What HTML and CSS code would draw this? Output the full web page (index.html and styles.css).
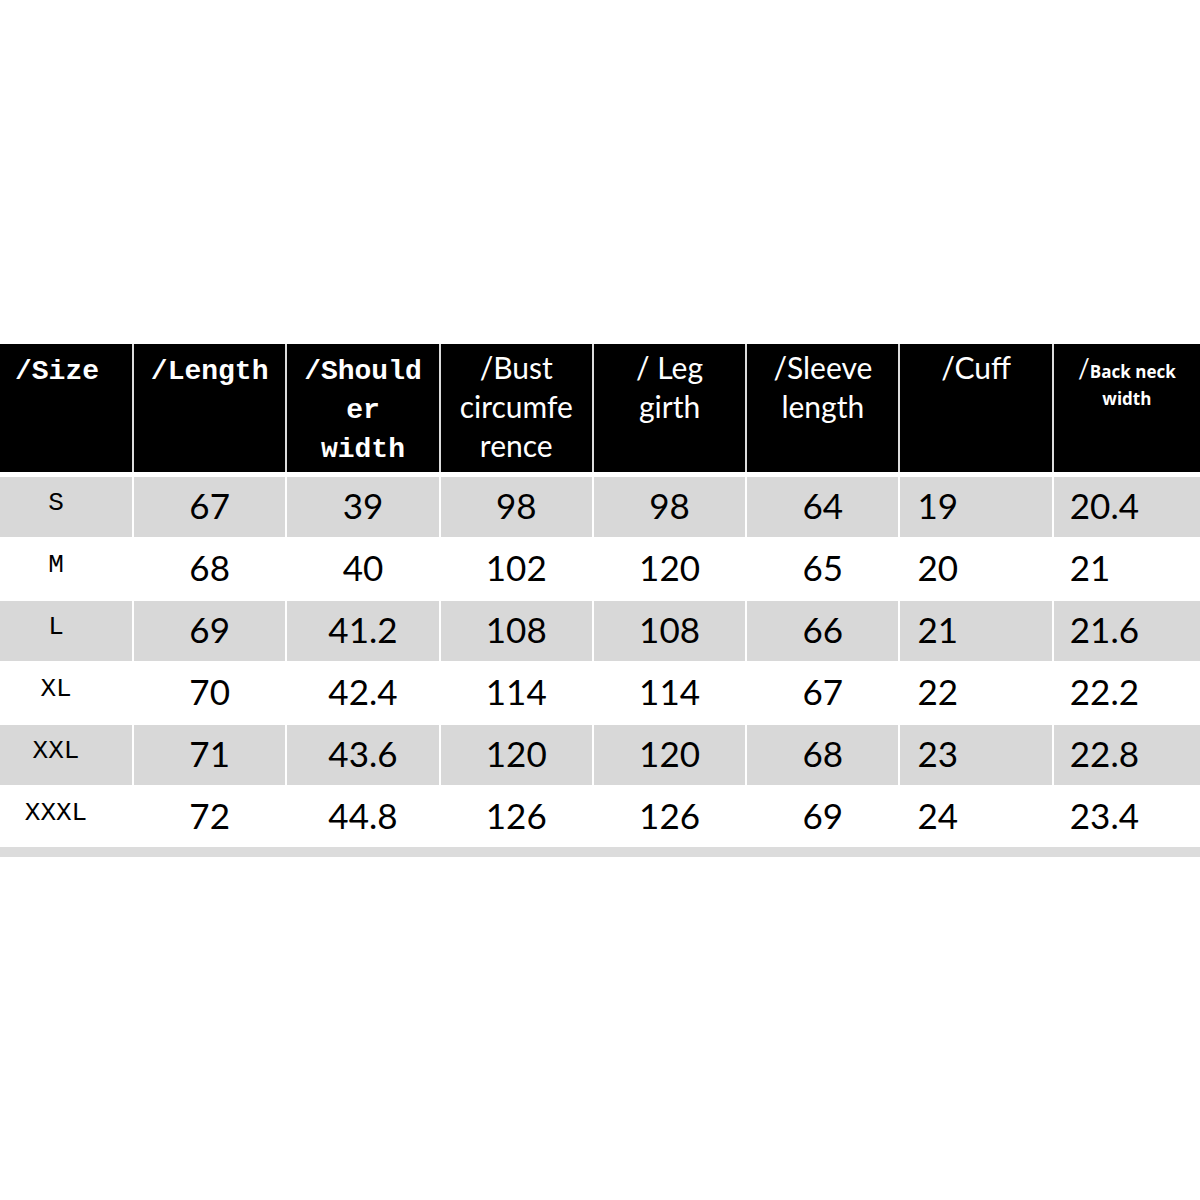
FILE: index.html
```html
<!DOCTYPE html>
<html>
<head>
<meta charset="utf-8">
<link rel="stylesheet" href="styles.css">
</head>
<body>
<div class="sheet">
  <div class="row head">
    <div class="hcell mono first">/Size</div>
    <div class="hcell mono">/Length</div>
    <div class="hcell mono">/Should<br>er<br>width</div>
    <div class="hcell sans">/Bust<br>circumfe<br>rence</div>
    <div class="hcell sans">/ Leg<br>girth</div>
    <div class="hcell sans">/Sleeve<br>length</div>
    <div class="hcell sans">/Cuff</div>
    <div class="hcell neck"><span class="slash">/</span>Back neck<br>width</div>
  </div>
  <div class="body">
    <div class="row data gray">
      <div class="cell size">S</div><div class="cell">67</div><div class="cell">39</div><div class="cell">98</div><div class="cell">98</div><div class="cell">64</div><div class="cell left">19</div><div class="cell left last">20.4</div>
    </div>
    <div class="row data">
      <div class="cell size">M</div><div class="cell">68</div><div class="cell">40</div><div class="cell">102</div><div class="cell">120</div><div class="cell">65</div><div class="cell left">20</div><div class="cell left last">21</div>
    </div>
    <div class="row data gray">
      <div class="cell size">L</div><div class="cell">69</div><div class="cell">41.2</div><div class="cell">108</div><div class="cell">108</div><div class="cell">66</div><div class="cell left">21</div><div class="cell left last">21.6</div>
    </div>
    <div class="row data">
      <div class="cell size">XL</div><div class="cell">70</div><div class="cell">42.4</div><div class="cell">114</div><div class="cell">114</div><div class="cell">67</div><div class="cell left">22</div><div class="cell left last">22.2</div>
    </div>
    <div class="row data gray">
      <div class="cell size">XXL</div><div class="cell">71</div><div class="cell">43.6</div><div class="cell">120</div><div class="cell">120</div><div class="cell">68</div><div class="cell left">23</div><div class="cell left last">22.8</div>
    </div>
    <div class="row data">
      <div class="cell size">XXXL</div><div class="cell">72</div><div class="cell">44.8</div><div class="cell">126</div><div class="cell">126</div><div class="cell">69</div><div class="cell left">24</div><div class="cell left last">23.4</div>
    </div>
  </div>
  <div class="strip"></div>
</div>
</body>
</html>
```
FILE: styles.css
```css
html, body {
  margin: 0;
  padding: 0;
  background: #ffffff;
}

.sheet {
  width: 1200px;
  padding-top: 344px;
}

.row {
  display: grid;
  grid-template-columns: 132px repeat(6, 151.3px) 1fr;
  column-gap: 2px;
}

.head {
  height: 128px;
  background: #dcdcdc;
}

.hcell {
  background: #000000;
  color: #ffffff;
  text-align: center;
  padding-top: 8px;
  line-height: 39px;
}

.mono {
  font-family: "Liberation Mono", monospace;
  font-weight: bold;
  font-size: 28px;
}

.mono.first {
  text-align: left;
  padding-left: 15px;
}

.sans {
  font-family: Lato, "Open Sans", sans-serif;
  font-size: 30px;
  padding-top: 4px;
}

.neck {
  font-family: "Open Sans", sans-serif;
  font-weight: bold;
  font-size: 17px;
  line-height: 27px;
  padding-top: 11px;
}

.neck .slash {
  font-family: Lato, sans-serif;
  font-weight: normal;
  font-size: 26px;
}

.body {
  margin-top: 5px;
  display: flex;
  flex-direction: column;
  row-gap: 2px;
}

.data {
  height: 60px;
  background: #ffffff;
}

.cell {
  display: flex;
  align-items: center;
  justify-content: center;
  font-family: Lato, "Open Sans", sans-serif;
  font-size: 35px;
  color: #000000;
  padding-bottom: 4px;
  box-sizing: border-box;
}

.gray .cell {
  background: #d8d8d8;
}

.cell.size {
  font-family: "Liberation Mono", monospace;
  font-size: 26px;
  padding-right: 20px;
  padding-bottom: 9px;
}

.cell.left {
  justify-content: flex-start;
  padding-left: 17px;
}

.cell.left.last {
  padding-left: 16px;
}

.strip {
  height: 10px;
  background: #dcdcdc;
}
```
